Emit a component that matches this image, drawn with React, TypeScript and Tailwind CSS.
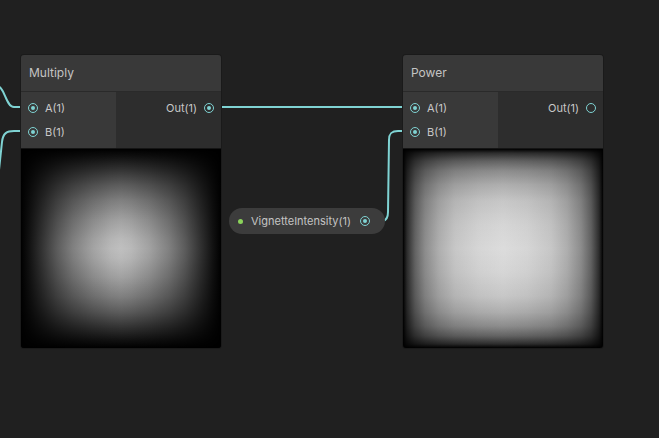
import React from "react";

const WIRE = "#7fd3d3";

const Port = ({ filled = true }: { filled?: boolean }) => (
  <div className="w-[10px] h-[10px] rounded-full border-[1.5px] border-[#7fd3d3] flex items-center justify-center shrink-0">
    {filled && <div className="w-[4px] h-[4px] rounded-full bg-[#7fd3d3]" />}
  </div>
);

const Node = ({
  title,
  className,
  outFilled,
  preview,
}: {
  title: string;
  className: string;
  outFilled: boolean;
  preview: string;
}) => (
  <div className={`absolute w-[200px] rounded-[3px] shadow-[0_0_0_1px_#1a1a1a] ${className}`}>
    <div className="h-[36px] bg-[#393939] rounded-t-[3px] flex items-center px-[8px] text-[12px] text-[#c4c4c4]">
      {title}
    </div>
    <div className="flex h-[57px]">
      <div className="w-[95px] bg-[#393939] pt-[4px] pl-[7px] border-t border-[#2a2a2a]">
        {["A(1)", "B(1)"].map((p) => (
          <div key={p} className="h-[24px] flex items-center gap-[7px] text-[11px] text-[#c8c8c8]">
            <Port />
            <span>{p}</span>
          </div>
        ))}
      </div>
      <div className="flex-1 bg-[#2d2d2d] pt-[4px] pr-[7px] border-t border-[#2a2a2a]">
        <div className="h-[24px] flex items-center justify-end gap-[7px] text-[11px] text-[#c8c8c8]">
          <span>Out(1)</span>
          <Port filled={outFilled} />
        </div>
      </div>
    </div>
    <div className={`h-[200px] rounded-b-[3px] border-t border-[#151515] bg-blend-multiply ${preview}`} />
  </div>
);

export default function App() {
  return (
    <div
      className="relative w-[659px] h-[438px] overflow-hidden bg-[#202020]"
      style={{ fontFamily: "Inter, 'Noto Sans', sans-serif" }}
    >
      <svg className="absolute inset-0" width="659" height="438" fill="none">
        <g stroke={WIRE} strokeWidth="2" strokeLinecap="round">
          <path d="M -2 86 C 5 88, 6 107, 14 107 L 24 107" />
          <path d="M -1 170 L 2 142 C 3 133, 7 131, 14 131 L 24 131" />
          <path d="M 216 107 L 406 107" />
          <path d="M 383 221 C 387 220, 388 217, 388 212 L 389 140 C 389 133, 392 131, 398 131 L 406 131" />
        </g>
        <g stroke="#5a6a6a" strokeWidth="2">
          <path d="M 22 107 L 28 107" />
          <path d="M 22 131 L 28 131" />
          <path d="M 403 107 L 410 107" />
          <path d="M 403 131 L 410 131" />
        </g>
      </svg>

      <Node
        title="Multiply"
        className="left-[21px] top-[55px]"
        outFilled
        preview="bg-[linear-gradient(to_right,#000_0%,#141414_4%,#383838_10%,#6a6a6a_18%,#949494_26%,#bcbcbc_36%,#d6d6d6_45%,#dddddd_50%,#d6d6d6_55%,#bcbcbc_64%,#949494_74%,#6a6a6a_82%,#383838_90%,#141414_96%,#000_100%),linear-gradient(to_bottom,#000_0%,#141414_4%,#383838_10%,#6a6a6a_18%,#949494_26%,#bcbcbc_36%,#d6d6d6_45%,#dddddd_50%,#d6d6d6_55%,#bcbcbc_64%,#949494_74%,#6a6a6a_82%,#383838_90%,#141414_96%,#000_100%)]"
      />
      <Node
        title="Power"
        className="left-[403px] top-[55px]"
        outFilled={false}
        preview="bg-[linear-gradient(to_right,#000_0%,#303030_2%,#6a6a6a_6%,#979797_11%,#bcbcbc_18%,#d6d6d6_26%,#e6e6e6_38%,#ededed_50%,#e6e6e6_62%,#d6d6d6_74%,#bcbcbc_82%,#979797_89%,#6a6a6a_94%,#303030_98%,#000_100%),linear-gradient(to_bottom,#000_0%,#303030_2%,#6a6a6a_6%,#979797_11%,#bcbcbc_18%,#d6d6d6_26%,#e6e6e6_38%,#ededed_50%,#e6e6e6_62%,#d6d6d6_74%,#bcbcbc_82%,#979797_89%,#6a6a6a_94%,#303030_98%,#000_100%)]"
      />

      <div className="absolute left-[229px] top-[208px] w-[156px] h-[26px] rounded-full bg-[#3c3c3c] flex items-center pl-[9px] pr-[15px] text-[11px] text-[#c4c4c4]">
        <div className="w-[5px] h-[5px] rounded-full bg-[#8bd35b]" />
        <span className="ml-[8px] flex-1">VignetteIntensity(1)</span>
        <Port />
      </div>
    </div>
  );
}
